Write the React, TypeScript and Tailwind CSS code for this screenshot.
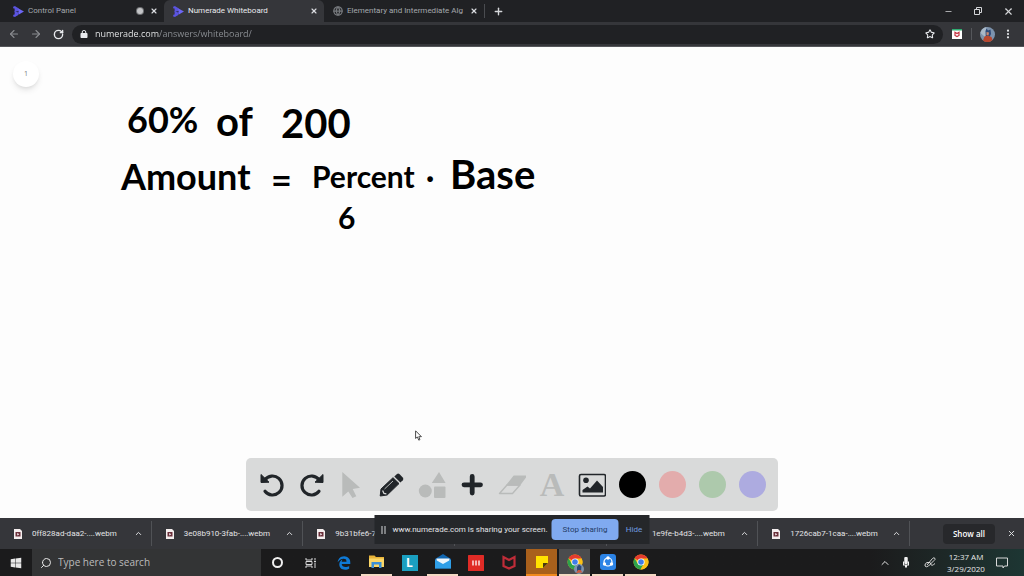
import React, { useState } from 'react';
import { ArrowLeft, ArrowRight, RotateCw, Star, X, ChevronUp, Plus, Minus, Globe, Search } from 'lucide-react';
import { FaEdgeLegacy, FaWindows, FaLock } from 'react-icons/fa6';

const NumeradeIcon = () => (
  <svg viewBox="0 0 20 20" className="size-[11px] shrink-0" fill="#5b54e0">
    <path d="M3 0 L10 4 L9 9 L3 11 Z" />
    <path d="M9 4 L20 10 L10 16 Z" fill="#6d66f5" />
    <path d="M3 9 L11 11 L9 17 L3 20 Z" />
    <circle cx="2.5" cy="2.5" r="2.2" />
    <circle cx="2.5" cy="17.5" r="2.2" />
    <path d="M5 10 L11 9.5 L9 12 Z" fill="#2c2b66" />
  </svg>
);

const ChromeIcon = () => (
  <svg viewBox="0 0 32 32" className="size-4">
    <circle cx="16" cy="16" r="15" fill="#fbc116" />
    <path d="M16 16 L3 8.5 A15 15 0 0 1 29 8.5 Z" fill="#e33b2e" />
    <path d="M3 8.5 A15 15 0 0 0 15 31 L21.5 20 L9.5 19.5 Z" fill="#2ca24c" />
    <path d="M16 9 H29.3 A15 15 0 0 1 15 31 L22 19.5 Z" fill="#fbc116" />
    <circle cx="16" cy="16" r="7.2" fill="#fff" />
    <circle cx="16" cy="16" r="5.6" fill="#3f7de8" />
  </svg>
);

const Avatar = () => (
  <svg viewBox="0 0 30 30" className="size-[15px]">
    <circle cx="15" cy="15" r="15" fill="#7d93ad" />
    <path d="M1 12 A15 15 0 0 1 13 0 L10 20 Z" fill="#a9b8c8" />
    <path d="M11 8 L13 3 L16 7 L21 5 L22 14 L19 20 L12 18 Z" fill="#2f4a78" />
    <path d="M13 10 L18 11 L17 17 L13 16 Z" fill="#c98a74" />
    <path d="M6 27 L9 19 L15 17 L23 20 L25 26 A15 15 0 0 1 6 27 Z" fill="#b8472f" />
  </svg>
);

interface TabProps {
  title: string;
  icon: React.ReactNode;
  active?: boolean;
  recording?: boolean;
}

const Tab: React.FC<TabProps> = ({ title, icon, active, recording }) => (
  <div className={`flex w-40 items-center gap-1 rounded-t-md px-[9px] ${active ? 'bg-[#35363a] text-[#e8eaed]' : 'text-[#a4a8ad]'}`}>
    {icon}
    <button className="min-w-0 flex-1 whitespace-nowrap text-left">{title}</button>
    {recording && (
      <span className="mr-[2px] flex size-2 items-center justify-center rounded-full bg-[#6f7174]">
        <span className="size-[6px] rounded-full bg-[#c4c5c7]" />
      </span>
    )}
    <button aria-label="Close tab" className="-mr-[3px] text-[#dadce0]">
      <X size={8} strokeWidth={3.5} />
    </button>
  </div>
);

const BrowserHeader = () => {
  const [url, setUrl] = useState('numerade.com/answers/whiteboard/');

  return (
    <header>
      <div className="flex h-[22px] bg-[#202124] pl-1 font-[Roboto,sans-serif] text-[8px]">
        <Tab title="Control Panel" icon={<NumeradeIcon />} recording />
        <Tab title="Numerade Whiteboard" icon={<NumeradeIcon />} active />
        <Tab title="Elementary and Intermediate Alg" icon={<Globe size={10} className="shrink-0 text-[#777a7e]" strokeWidth={3} />} />
        <button aria-label="New tab" className="my-1 flex items-center border-l border-[#4a4c50] px-2 text-[#d5d7da]">
          <Plus size={11} strokeWidth={3} />
        </button>
        <div className="ml-auto flex pr-[1px] text-[#d5d7da]">
          <button aria-label="Minimize" className="flex w-[30px] items-center justify-center"><Minus size={9} strokeWidth={2} /></button>
          <button aria-label="Restore" className="flex w-[30px] items-center justify-center">
            <svg viewBox="0 0 8 8" className="size-2" fill="none" stroke="currentColor">
              <path d="M.5 2.5 H5.5 V7.5 H.5 Z M2.5 2 V.5 H7.5 V5.5 H6" />
            </svg>
          </button>
          <button aria-label="Close" className="flex w-[30px] items-center justify-center"><X size={11} strokeWidth={2.5} /></button>
        </div>
      </div>
      <div className="flex h-[25px] items-center border-b border-[#55565a] bg-[#35363a] px-[3px] text-[#8a8c90]">
        <button aria-label="Back" className="flex w-[22px] justify-center"><ArrowLeft size={12} strokeWidth={2.2} /></button>
        <button aria-label="Forward" className="flex w-[22px] justify-center"><ArrowRight size={12} strokeWidth={2.2} /></button>
        <button aria-label="Reload" className="flex w-[22px] justify-center text-[#e8eaed]"><RotateCw size={11} strokeWidth={3} /></button>
        <div className="ml-[3px] flex h-[19px] flex-1 items-center gap-[7px] rounded-full bg-[#202124] px-2 text-[#e8eaed]">
          <FaLock size={8} className="shrink-0" />
          <input
            aria-label="Address"
            value={url}
            onChange={(e) => setUrl(e.target.value)}
            className="min-w-0 flex-1 bg-[linear-gradient(to_right,#f1f3f4_64px,#8e9297_64px)] bg-clip-text text-[9px] text-transparent outline-none"
          />
          <button aria-label="Bookmark"><Star size={10} strokeWidth={2.5} /></button>
        </div>
        <button aria-label="McAfee WebAdvisor" className="ml-[9px]">
          <svg viewBox="0 0 20 20" className="size-[10px]">
            <rect width="20" height="20" fill="#fff" />
            <rect width="20" height="3" fill="#2fae72" />
            <path d="M6 6.5 V13 L10 15 L14 13 V6.5 L10 9 Z" fill="none" stroke="#c4303f" strokeWidth="2.4" />
          </svg>
        </button>
        <span className="ml-[9px] h-3 w-px bg-[#55575b]" />
        <button aria-label="Profile" className="ml-2"><Avatar /></button>
        <button aria-label="Menu" className="mx-[11px]">
          <svg viewBox="0 0 4 12" className="h-[10px] w-1" fill="#e8eaed">
            <circle cx="2" cy="2" r="1.3" /><circle cx="2" cy="6" r="1.3" /><circle cx="2" cy="10" r="1.3" />
          </svg>
        </button>
      </div>
    </header>
  );
};

// words written on the canvas, each at its own spot
const notes = [
  { text: '60%', place: 'left-[127px] top-[54px] text-4xl' },
  { text: 'of', place: 'left-[216px] top-[54px] text-[40px]' },
  { text: '200', place: 'left-[281px] top-[56px] text-[40px]' },
  { text: 'Amount', place: 'left-[121px] top-[111px] text-4xl' },
  { text: '=', place: 'left-[271px] top-[114px] text-4xl' },
  { text: 'Percent', place: 'left-[312px] top-[114px] text-3xl' },
  { text: '·', place: 'left-[426px] top-[114px] text-3xl' },
  { text: 'Base', place: 'left-[450px] top-[107px] text-[40px]' },
  { text: '6', place: 'left-[338px] top-[155px] text-3xl' },
];

const tools = [
  {
    name: 'Undo',
    icon: (
      <g fill="none" stroke="#212529">
        <path d="M6.8 9 A9.5 9.5 0 1 1 7 20.3" strokeWidth="3.2" strokeLinecap="round" />
        <path d="M3 3.5 V11.5 L11 11.2 Z" fill="#212529" strokeWidth="1" strokeLinejoin="round" />
      </g>
    ),
  },
  {
    name: 'Redo',
    icon: (
      <g fill="none" stroke="#212529">
        <path d="M21.2 9 A9.5 9.5 0 1 0 21 20.3" strokeWidth="3.2" strokeLinecap="round" />
        <path d="M25 3.5 V11.5 L17 11.2 Z" fill="#212529" strokeWidth="1" strokeLinejoin="round" />
      </g>
    ),
  },
  { name: 'Select', icon: <path d="M4.3 1 V25.7 L10.3 20.5 L14.5 27 L18.3 25.3 L14.7 18 L22 16.7 Z" fill="#b9bbba" /> },
  {
    name: 'Pen',
    icon: (
      <g fill="#212529">
        <path d="M2.2 25 L3 18 L15 6.7 L21 12.6 L9.2 24 Z" strokeLinejoin="round" stroke="#212529" />
        <path d="M16.3 5.5 L19 2.9 Q20.2 2 21.4 3 L25 6.8 Q25.8 8 24.8 9.2 L22.4 11.5 Z" />
        <path d="M6.5 18 L15 10" stroke="#b9bbba" strokeWidth="1" />
        <path d="M4.6 19.5 L6 22.5 L8.4 22.8" stroke="#d9dada" strokeWidth="1.3" fill="none" />
      </g>
    ),
  },
  {
    name: 'Shapes',
    icon: (
      <g fill="#b9bbba">
        <circle cx="7.3" cy="20" r="6.5" />
        <rect x="16" y="15.5" width="11.5" height="11.5" rx="1" />
        <path d="M21 1 L27.6 12 H13.8 Z" />
      </g>
    ),
  },
  { name: 'Add', icon: <path d="M14.2 5.5 V22 M6 13.8 H22.5" stroke="#212529" strokeWidth="4.8" strokeLinecap="round" /> },
  {
    name: 'Eraser',
    icon: (
      <g stroke="#b9bbba" strokeWidth="1.4" strokeLinejoin="round">
        <path d="M1.5 22.5 L9 14 H22 L14.5 22.5 Z" fill="none" />
        <path d="M9 14 L16 5.3 H28 L21.5 14 Z" fill="#b9bbba" />
      </g>
    ),
  },
  { name: 'Text', icon: null },
  {
    name: 'Image',
    icon: (
      <g fill="#212529">
        <rect x="1.5" y="3.5" width="26" height="21.5" rx="1.5" fill="none" stroke="#212529" strokeWidth="1.6" />
        <circle cx="8" cy="9.3" r="2.8" />
        <path d="M4.5 21.5 V19 L9.5 15.5 L12 17.5 L19 9.5 L25 16 V21.5 Z" />
      </g>
    ),
  },
];

const colors = [
  { name: 'Black', style: 'bg-black' },
  { name: 'Red', style: 'bg-[#e3acac]' },
  { name: 'Green', style: 'bg-[#adc9ac]' },
  { name: 'Blue', style: 'bg-[#adabe0]' },
];

const Whiteboard = () => (
  <main className="relative flex min-h-0 flex-1 flex-col items-center justify-between bg-[#fdfdfd] pb-[7px] pt-[14px]">
    <button className="ml-[13px] flex size-[26px] items-center justify-center self-start rounded-full bg-white text-[7px] text-[#77797c] shadow-md">
      1
    </button>
    {notes.map((note) => (
      <span key={note.text} className={`absolute font-[Lato,sans-serif] font-bold leading-none text-black ${note.place}`}>
        {note.text}
      </span>
    ))}
    <svg viewBox="0 0 12 18" className="absolute left-[415px] top-[383px] h-[11px] w-[7px]" fill="#fff" stroke="#333" strokeWidth="1.5">
      <path d="M1 1 V14 L4 11.5 L6.5 17 L8.5 16 L6.5 11 H11 Z" />
    </svg>
    <div className="flex h-[53px] items-center rounded-[5px] bg-[#d9dada] px-[6px]">
      {tools.map((tool) => (
        <button key={tool.name} aria-label={tool.name} className="flex w-10 justify-center">
          {tool.icon ? (
            <svg viewBox="0 0 28 28" className="size-7">{tool.icon}</svg>
          ) : (
            <span className="font-['Liberation_Serif',serif] text-[34px] font-bold leading-7 text-[#b9bbba]">A</span>
          )}
        </button>
      ))}
      {colors.map((color) => (
        <button key={color.name} aria-label={color.name} className="flex w-10 justify-center">
          <span className={`size-[27px] rounded-full ${color.style}`} />
        </button>
      ))}
    </div>
  </main>
);

const downloads = [
  '0ff828ad-daa2-....webm',
  '3e08b910-3fab-....webm',
  '9b31bfe6-7',
  '',
  '1e9fe-b4d3-....webm',
  '1726cab7-1caa-....webm',
];

const DownloadBar = () => (
  <section className="relative flex h-[31px] items-stretch bg-[#35363a] font-[Roboto,sans-serif] text-[8px] text-[#e3e4e6]">
    <ul className="grid flex-1 grid-cols-6">
      {downloads.map((file, i) => (
        <li key={i} className="my-[3px] flex items-center border-r border-[#505256] pl-[14px] pr-2">
          {file && (
            <>
              <svg viewBox="0 0 16 20" className="h-[10px] w-2 shrink-0">
                <path d="M0 0 H12 L16 4 V20 H0 Z" fill="#f4eeee" />
                <rect x="3" y="6" width="10" height="9" fill="#6b2f3a" />
                <path d="M6.5 8 L10.5 10.5 L6.5 13 Z" fill="#fff" />
              </svg>
              <button className={`ml-[10px] w-[86px] whitespace-nowrap ${i === 4 ? 'text-right' : 'text-left'}`}>{file}</button>
              <button aria-label="Download options" className="ml-auto"><ChevronUp size={9} strokeWidth={2.5} /></button>
            </>
          )}
        </li>
      ))}
    </ul>
    <div className="flex w-[114px] items-center justify-end gap-3 pr-2">
      <button className="h-5 rounded-sm bg-[#27282b] px-[10px] font-['Open_Sans',sans-serif] font-semibold text-white">Show all</button>
      <button aria-label="Close downloads"><X size={9} strokeWidth={2.5} /></button>
    </div>
    <div className="absolute -top-[3px] left-1/2 flex h-[29px] w-[275px] -translate-x-1/2 items-center bg-[#25272a] pl-[7px]">
      <span className="h-2 w-1 border-x border-[#d5d7da]" />
      <span className="ml-[7px] flex-1 whitespace-nowrap">www.numerade.com is sharing your screen.</span>
      <button className="h-[21px] w-[67px] rounded-sm bg-[#80aaf0] text-[#243c66]">Stop sharing</button>
      <button className="w-[31px] text-[#6f9be0]">Hide</button>
    </div>
  </section>
);

const apps = [
  {
    name: 'Cortana',
    cell: '',
    icon: <span className="size-[11px] rounded-full border-2 border-[#f0f0f0]" />,
  },
  {
    name: 'Task View',
    cell: '',
    icon: (
      <svg viewBox="0 0 24 20" className="h-[10px] w-3" fill="none" stroke="#d8d8d8" strokeWidth="2">
        <path d="M2 0 V4 H14 V0 M2 20 V16 H14 V20 M2 7 H14 V13 H2 Z M20 0 V4 M20 10 V20" />
        <path d="M18 7 H22" strokeWidth="3" />
      </svg>
    ),
  },
  { name: 'Edge', cell: '', icon: <FaEdgeLegacy size={14} className="text-[#0f7ad6]" /> },
  {
    name: 'File Explorer',
    cell: 'border-[#f3d9c3]',
    icon: (
      <svg viewBox="0 0 30 26" className="h-[13px] w-[15px]">
        <path d="M0 1 H11 L14 4 H30 V24 H0 Z" fill="#e8b339" />
        <path d="M0 7 H30 V24 H0 Z" fill="#fbd768" />
        <path d="M5 26 V14 H25 V26 H20 V19 H10 V26 Z" fill="#3b8fd6" />
      </svg>
    ),
  },
  {
    name: 'Lockdown',
    cell: '',
    icon: <span className="flex size-4 items-center justify-center bg-[#1a9fc0] text-xs font-bold text-white">L</span>,
  },
  {
    name: 'Mail',
    cell: 'border-[#f3d9c3]',
    icon: (
      <svg viewBox="0 0 32 30" className="h-[15px] w-4">
        <path d="M0 10 L16 0 L32 10 V29 H0 Z" fill="#1166b0" />
        <path d="M3 9 H29 V20 H3 Z" fill="#eef6fc" />
        <path d="M0 11 L16 20 L32 11 V29 H0 Z" fill="#2f9fe8" />
      </svg>
    ),
  },
  {
    name: 'Reader',
    cell: '',
    icon: (
      <svg viewBox="0 0 32 32" className="size-4">
        <rect width="32" height="32" rx="1" fill="#e02b26" />
        <path d="M10 11 V21 M16 11 V21 M22 11 V21" stroke="#fff" strokeWidth="2.6" />
      </svg>
    ),
  },
  {
    name: 'McAfee',
    cell: '',
    icon: (
      <svg viewBox="0 0 28 30" className="h-[15px] w-[14px]" fill="none" stroke="#bf2c38" strokeWidth="4.4">
        <path d="M3 4 V22 L14 27 L25 22 V4 L14 10 Z" />
      </svg>
    ),
  },
  {
    name: 'Sticky Notes',
    cell: 'bg-[#a8601c] border-[#f08a1e]',
    icon: (
      <svg viewBox="0 0 24 24" className="size-3">
        <path d="M0 0 H24 V14 L14 24 H0 Z" fill="#ffe100" />
        <path d="M14 14 H24 L14 24 Z" fill="#4a3a10" />
      </svg>
    ),
  },
  {
    name: 'Chrome, sharing',
    cell: 'bg-[#4b4c4e] border-[#f3d9c3]',
    icon: (
      <span className="relative">
        <ChromeIcon />
        <svg viewBox="0 0 20 20" className="absolute -bottom-1 left-[7px] size-[10px]">
          <circle cx="10" cy="10" r="10" fill="#7d93ad" />
          <path d="M6 6 L10 1 L15 5 L14 14 H6 Z" fill="#2f4a78" />
          <path d="M4 18 L8 12 H13 L17 17 Z" fill="#c9593f" />
        </svg>
      </span>
    ),
  },
  {
    name: 'Share',
    cell: 'border-[#f3d9c3]',
    icon: (
      <svg viewBox="0 0 32 32" className="size-4">
        <rect width="32" height="32" rx="6" fill="#2b83e6" />
        <circle cx="16" cy="16" r="8" fill="none" stroke="#fff" strokeWidth="2.4" />
        <circle cx="16" cy="8" r="3.4" fill="#fff" /><circle cx="9" cy="20" r="3.4" fill="#fff" /><circle cx="23" cy="20" r="3.4" fill="#fff" />
      </svg>
    ),
  },
  { name: 'Chrome', cell: 'border-[#f3d9c3]', icon: <ChromeIcon /> },
];

const Taskbar = () => (
  <footer className="flex h-[27px] bg-linear-to-r from-[#1b1b1c] from-85% to-[#1d3633] text-[#e8e8e8]">
    <button aria-label="Start" className="flex w-8 items-center justify-center"><FaWindows size={12} /></button>
    <label className="flex w-[229px] items-center gap-[6px] bg-[#333435] pl-2">
      <Search size={12} strokeWidth={2} className="-scale-x-100" />
      <input aria-label="Search" placeholder="Type here to search" className="min-w-0 flex-1 text-[10px] outline-none placeholder:text-[#bcbcbc]" />
    </label>
    <nav className="flex">
      {apps.map((app) => (
        <button key={app.name} aria-label={app.name} className="flex w-[33px] px-[1px]">
          <span className={`flex h-full w-full items-center justify-center ${app.cell} ${app.cell ? 'border-b-2' : ''}`}>{app.icon}</span>
        </button>
      ))}
    </nav>
    <div className="ml-auto flex items-center">
      <button aria-label="Hidden icons" className="flex w-[21px] justify-center"><ChevronUp size={12} strokeWidth={2} /></button>
      <button aria-label="Microphone" className="flex w-[21px] justify-center">
        <svg viewBox="0 0 12 22" className="h-[11px] w-[6px]" fill="#f2f2f2">
          <rect x="2.5" width="7" height="14" rx="2" />
          <path d="M0 9 H2 V15 H10 V9 H12 V17 H8 V21 H4 V17 H0 Z" />
        </svg>
      </button>
      <button aria-label="Windows Ink" className="flex w-7 justify-center">
        <svg viewBox="0 0 24 22" className="h-[11px] w-3" fill="none" stroke="#d8d8d8" strokeWidth="2">
          <path d="M6 16 L17 3 Q20 0 22 3 Q23 5 20 7 L9 18 Q4 21 2 18 Q1 13 6 11 Q14 9 14 15 Q15 19 22 13" />
        </svg>
      </button>
      <div className="w-11 text-center text-[8px] leading-3">
        <div>12:37 AM</div>
        <div>3/29/2020</div>
      </div>
      <button aria-label="Notifications" className="ml-2 mr-4">
        <svg viewBox="0 0 24 24" className="size-3" fill="none" stroke="#d8d8d8" strokeWidth="2">
          <path d="M1 2 H23 V18 H17 L14 22 V18 H1 Z" />
        </svg>
      </button>
    </div>
  </footer>
);

const App: React.FC = () => {
  return (
    <div className="flex h-screen flex-col overflow-hidden font-['Open_Sans',sans-serif]">
      <BrowserHeader />
      <Whiteboard />
      <DownloadBar />
      <Taskbar />
    </div>
  );
};

export default App;
